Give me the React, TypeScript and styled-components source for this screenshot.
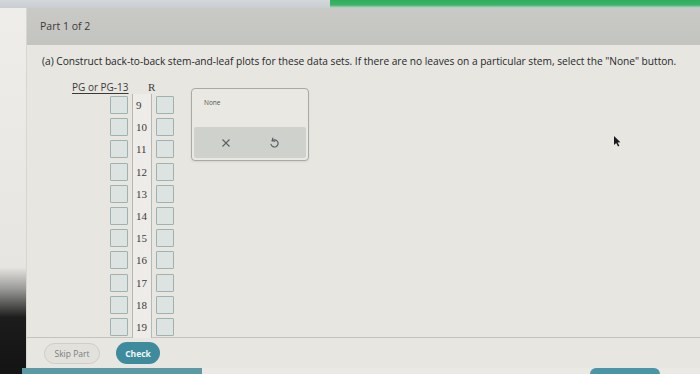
import styled, { createGlobalStyle } from 'styled-components';

const stems = [9, 10, 11, 12, 13, 14, 15, 16, 17, 18, 19];

const GlobalStyle = createGlobalStyle`
  html, body {
    margin: 0;
    padding: 0;
    background: #e7e5e0;
    overflow: hidden;
  }
  * {
    box-sizing: border-box;
  }
`;

function App() {
  return (
    <>
      <GlobalStyle />
      <Screen>
        <TopStrip>
          <TopGrey />
          <TopGreen />
        </TopStrip>
        <Main>
          <LeftEdge />
          <Content>
            <PartHeader>Part 1 of 2</PartHeader>
            <Question>
              (a) Construct back-to-back stem-and-leaf plots for these data sets. If there are no
              leaves on a particular stem, select the "None" button.
            </Question>
            <Workspace>
              <Plot>
                <PlotHeader>
                  <LeftLabel>PG or PG-13</LeftLabel>
                  <RightLabel>R</RightLabel>
                </PlotHeader>
                {stems.map((stem) => (
                  <PlotRow key={stem}>
                    <LeafBox />
                    <Stem>{stem}</Stem>
                    <LeafBox />
                  </PlotRow>
                ))}
              </Plot>
              <Palette>
                <PaletteTop>None</PaletteTop>
                <PaletteActions>
                  <ActionIcon>
                    <svg width="10" height="10" viewBox="0 0 10 10">
                      <path d="M1.5 1.5 L8.5 8.5 M8.5 1.5 L1.5 8.5" stroke="#5a5f62" strokeWidth="1.1" fill="none" />
                    </svg>
                  </ActionIcon>
                  <ActionIcon>
                    <svg width="10" height="12" viewBox="0 0 10 12">
                      <path
                        d="M3.2 3.6 A3.6 3.6 0 1 1 2 7.4"
                        stroke="#5a5f62"
                        strokeWidth="1.2"
                        fill="none"
                        strokeLinecap="round"
                      />
                      <path d="M3.8 1.2 L3.2 3.8 L5.8 4.2" stroke="#5a5f62" strokeWidth="1.2" fill="none" strokeLinecap="round" />
                    </svg>
                  </ActionIcon>
                </PaletteActions>
              </Palette>
              <Cursor>
                <svg width="8" height="12" viewBox="0 0 8 12">
                  <path d="M1 1 L1 10 L3.2 8 L5 11.5 L6.4 10.8 L4.6 7.4 L7.4 7.2 Z" fill="#1c1c1c" />
                </svg>
              </Cursor>
            </Workspace>
            <Divider />
            <Footer>
              <SkipButton type="button">Skip Part</SkipButton>
              <CheckButton type="button">Check</CheckButton>
            </Footer>
          </Content>
        </Main>
        <BottomStrip>
          <BottomDark />
          <BottomTeal />
          <BottomSpacer />
          <SaveButton />
        </BottomStrip>
      </Screen>
    </>
  );
}
export default App;

const Screen = styled.div`
  width: 700px;
  height: 374px;
  display: flex;
  flex-direction: column;
  background: #e7e5e0;
  font-family: 'Open Sans', 'Liberation Sans', sans-serif;
  color: #333;
`;

const TopStrip = styled.div`
  height: 8px;
  display: flex;
  flex-shrink: 0;
`;

const TopGrey = styled.div`
  width: 330px;
  background: linear-gradient(180deg, #d4d8da 0%, #c8cdd2 100%);
`;

const TopGreen = styled.div`
  flex: 1;
  background: linear-gradient(180deg, #2fae5e 0%, #3bb366 60%, #c8d2d2 100%);
`;

const Main = styled.div`
  flex: 1;
  display: flex;
  min-height: 0;
`;

const LeftEdge = styled.div`
  width: 27px;
  flex-shrink: 0;
  background: linear-gradient(
    180deg,
    #eeede9 0%,
    #e6e5e1 72%,
    #9a9a98 78%,
    #1c1c1c 86%,
    #141414 100%
  );
  border-right: 1px solid #d8d6d1;
`;

const Content = styled.div`
  flex: 1;
  display: flex;
  flex-direction: column;
  background: #e8e6e1;
`;

const PartHeader = styled.div`
  height: 37px;
  display: flex;
  align-items: center;
  padding-left: 13px;
  padding-bottom: 2px;
  background: linear-gradient(180deg, #c9c9c5 0%, #c3c3bf 100%);
  font-size: 10.5px;
  color: #3a3a3a;
`;

const Question = styled.div`
  margin-top: 9px;
  padding-left: 15px;
  font-size: 10.2px;
  line-height: 14px;
  color: #26282b;
  white-space: nowrap;
  letter-spacing: -0.02px;
`;

const Workspace = styled.div`
  position: relative;
  display: flex;
  align-items: flex-start;
  margin-top: 12px;
  padding-left: 45px;
  height: 257px;
`;

const Plot = styled.div`
  display: flex;
  flex-direction: column;
`;

const PlotHeader = styled.div`
  height: 14px;
  display: flex;
  align-items: center;
  font-size: 10px;
  color: #3a3a3a;
`;

const LeftLabel = styled.span`
  text-decoration: underline;
  text-underline-offset: 2px;
  width: 76px;
`;

const RightLabel = styled.span`
  font-family: 'Liberation Serif', 'DejaVu Serif', serif;
  font-size: 11px;
`;

const PlotRow = styled.div`
  height: 22.2px;
  display: flex;
  align-items: center;
  padding-left: 38px;
`;

const LeafBox = styled.div`
  width: 18px;
  height: 18px;
  border: 1px solid #9fb1b0;
  border-radius: 1px;
  background: #dde3e1;
`;

const Stem = styled.div`
  align-self: stretch;
  width: 20px;
  margin: 0 4px;
  display: flex;
  align-items: center;
  padding-left: 3px;
  border-left: 1px solid #b9b7b2;
  border-right: 1px solid #b9b7b2;
  background: #eeece8;
  font-family: 'Liberation Serif', 'DejaVu Serif', serif;
  font-size: 11px;
  color: #3a3a3a;
`;

const Palette = styled.div`
  margin-left: 17px;
  margin-top: 8px;
  width: 118px;
  height: 73px;
  border: 1px solid #a9aaa7;
  border-radius: 4px;
  background: #e9e8e3;
  display: flex;
  flex-direction: column;
  overflow: hidden;
  box-shadow: 0 1px 2px rgba(0, 0, 0, 0.08);
`;

const PaletteTop = styled.div`
  flex: 1;
  padding: 10px 0 0 12px;
  font-size: 6.5px;
  line-height: 8px;
  color: #555;
`;

const PaletteActions = styled.div`
  height: 31px;
  margin: 0 2px 2px;
  border-radius: 2px;
  background: #cfd1cd;
  display: flex;
  align-items: center;
  justify-content: space-around;
  padding: 0 8px;
`;

const ActionIcon = styled.span`
  display: flex;
  align-items: center;
  justify-content: center;
  width: 20px;
`;

const Cursor = styled.div`
  position: absolute;
  left: 586px;
  top: 50px;
`;

const Divider = styled.div`
  height: 1px;
  background: #c5c3be;
`;

const Footer = styled.div`
  height: 30px;
  display: flex;
  align-items: center;
  gap: 16px;
  padding-left: 17px;
`;

const SkipButton = styled.button`
  width: 56px;
  height: 21px;
  border-radius: 11px;
  border: 1px solid #cfcdc8;
  background: #e3e1dc;
  color: #7a7c7e;
  font-family: 'Open Sans', 'Liberation Sans', sans-serif;
  font-size: 8.5px;
  padding: 0;
`;

const CheckButton = styled.button`
  width: 44px;
  height: 22px;
  border-radius: 11px;
  border: none;
  background: #3d8b9d;
  color: #f2f6f7;
  font-family: 'Open Sans', 'Liberation Sans', sans-serif;
  font-size: 8.5px;
  font-weight: 700;
  padding: 0;
`;

const BottomStrip = styled.div`
  height: 6px;
  flex-shrink: 0;
  display: flex;
  background: #eae9e5;
`;

const BottomDark = styled.div`
  width: 22px;
  background: #151515;
`;

const BottomTeal = styled.div`
  width: 180px;
  background: #5b99a4;
`;

const BottomSpacer = styled.div`
  flex: 1;
`;

const SaveButton = styled.div`
  width: 70px;
  margin-right: 40px;
  border-radius: 6px 6px 0 0;
  background: #4a95a6;
`;
